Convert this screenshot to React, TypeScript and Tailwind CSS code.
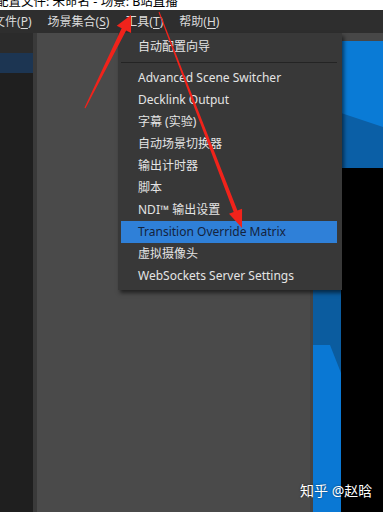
import React from "react";

const items: { label: string; sep?: boolean; active?: boolean }[] = [
  { label: "自动配置向导" },
  { label: "", sep: true },
  { label: "Advanced Scene Switcher" },
  { label: "Decklink Output" },
  { label: "字幕 (实验)" },
  { label: "自动场景切换器" },
  { label: "输出计时器" },
  { label: "脚本" },
  { label: "NDI™ 输出设置" },
  { label: "Transition Override Matrix", active: true },
  { label: "虚拟摄像头" },
  { label: "WebSockets Server Settings" },
];

function MenuBarItem({ label, mn }: { label: string; mn: string }) {
  return (
    <div className="px-2 whitespace-nowrap">
      {label}(<span className="underline underline-offset-2">{mn}</span>)
    </div>
  );
}

export default function App() {
  return (
    <div className="relative w-[383px] h-[512px] overflow-hidden flex flex-col bg-black font-['Noto_Sans','Noto_Sans_CJK_SC',sans-serif]">
      {/* title bar */}
      <div className="h-[10px] bg-white overflow-hidden shrink-0">
        <div className="mt-[-5px] ml-[-4px] text-[12.5px] leading-[14px] text-black whitespace-nowrap">
          配置文件: 未命名 - 场景: B站直播
        </div>
      </div>
      {/* menu bar */}
      <div className="h-[23px] bg-[#2e2e2e] flex items-center text-[12px] text-[#dcdcdc] shrink-0 ml-[-15px]">
        <MenuBarItem label="文件" mn="P" />
        <MenuBarItem label="场景集合" mn="S" />
        <MenuBarItem label="工具" mn="T" />
        <MenuBarItem label="帮助" mn="H" />
      </div>
      {/* body */}
      <div className="flex flex-1">
        <div className="w-[33px] flex flex-col">
          <div className="h-[20px] bg-[#2b2b2b]" />
          <div className="h-[20px] bg-[#1c3552]" />
          <div className="flex-1 bg-[#1f1f1f]" />
        </div>
        <div className="w-[4px] bg-[#3a3a3a]" />
        <div className="w-[276px] flex">
          <div className="flex-1 bg-[#4a4a4a]" />
          <div className="w-[3px] bg-[#444444]" />
        </div>
        <div className="w-[28px] flex flex-col">
          <div className="h-[257px] bg-[#3a3a3a]" />
          <svg width="28" height="222" viewBox="0 0 28 222" className="block">
            <rect width="28" height="222" fill="#0a78d4" />
            <polygon points="0,0 28,0 28,83 17,55 0,55" fill="#0b5c9f" />
          </svg>
        </div>
        <div className="w-[42px] flex flex-col">
          <div className="h-[8px] bg-[#474747]" />
          <svg width="42" height="127" viewBox="0 0 42 127" className="block">
            <rect width="42" height="127" fill="#0a7bd6" />
            <polygon points="0,72 42,86 42,127 0,127" fill="#0b5fa6" />
          </svg>
          <div className="flex-1 bg-black" />
        </div>
      </div>

      {/* dropdown menu */}
      <div className="absolute left-[118px] top-[33px] w-[224px] bg-[#383838] pt-[3px] pb-[3px] pl-[3px] pr-[5px] shadow-[2px_3px_4px_rgba(0,0,0,0.55)] text-[12px]">
        {items.map((it, i) =>
          it.sep ? (
            <div key={i} className="h-[9px] flex items-center">
              <div className="h-px w-full bg-[#242424]" />
            </div>
          ) : (
            <div
              key={i}
              className={
                it.active
                  ? "h-[22px] flex items-center pl-[17px] bg-[#2f80d8] text-[#14233d] whitespace-nowrap"
                  : "h-[22px] flex items-center pl-[17px] text-[#e4e4e4] whitespace-nowrap"
              }
            >
              {it.label}
            </div>
          )
        )}
      </div>

      {/* red arrows */}
      <svg className="absolute inset-0 pointer-events-none" width="383" height="512" viewBox="0 0 383 512">
        <polygon
          points="84.46,107.73 121.66,28.24 116.73,25.8 131,15 131.07,32.9 126.14,30.46 85.54,108.27"
          fill="#f0231b"
        />
        <polygon
          points="158.53,12.18 233.67,211.92 229.01,213.71 242,228 242.07,208.69 237.41,210.48 159.47,11.82"
          fill="#f0231b"
        />
      </svg>

      {/* watermark */}
      <div className="absolute left-[300px] top-[481px] text-[14px] leading-[20px] text-white whitespace-nowrap [text-shadow:0_0_2px_rgba(0,0,0,0.6)]">
        知乎 @赵晗
      </div>
    </div>
  );
}
